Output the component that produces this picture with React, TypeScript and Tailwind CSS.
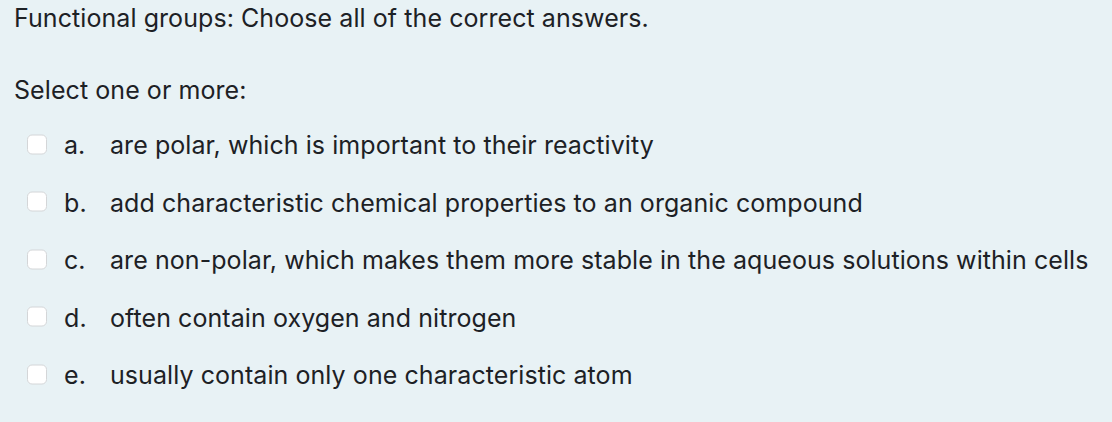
export default function App() {
  const options = [
    { key: "a.", text: "are polar, which is important to their reactivity" },
    { key: "b.", text: "add characteristic chemical properties to an organic compound" },
    { key: "c.", text: "are non-polar, which makes them more stable in the aqueous solutions within cells" },
    { key: "d.", text: "often contain oxygen and nitrogen" },
    { key: "e.", text: "usually contain only one characteristic atom" },
  ];
  return (
    <div
      className="w-[1112px] h-[422px] bg-[#e8f2f5] text-[#1d2125] overflow-hidden tracking-[0.07px]"
      style={{ fontFamily: "Inter, 'Liberation Sans', sans-serif" }}
    >
      <div className="pl-[14px] pt-[2px]">
        <div className="text-[25px] leading-[32px]">Functional groups: Choose all of the correct answers.</div>
        <div className="text-[25px] leading-[32px] mt-[40px]">Select one or more:</div>
        <div className="mt-[11px] flex flex-col">
          {options.map((o) => (
            <label key={o.key} className="flex items-center h-[57.5px]">
              <span className="ml-[13px] w-[20px] h-[20px] rounded-[5px] bg-white border border-[#d4d6d8] shrink-0 -translate-y-[1.5px]" />
              <span className="ml-[17px] w-[46px] text-[25px]">{o.key}</span>
              <span className="text-[25px]">{o.text}</span>
            </label>
          ))}
        </div>
      </div>
    </div>
  );
}
